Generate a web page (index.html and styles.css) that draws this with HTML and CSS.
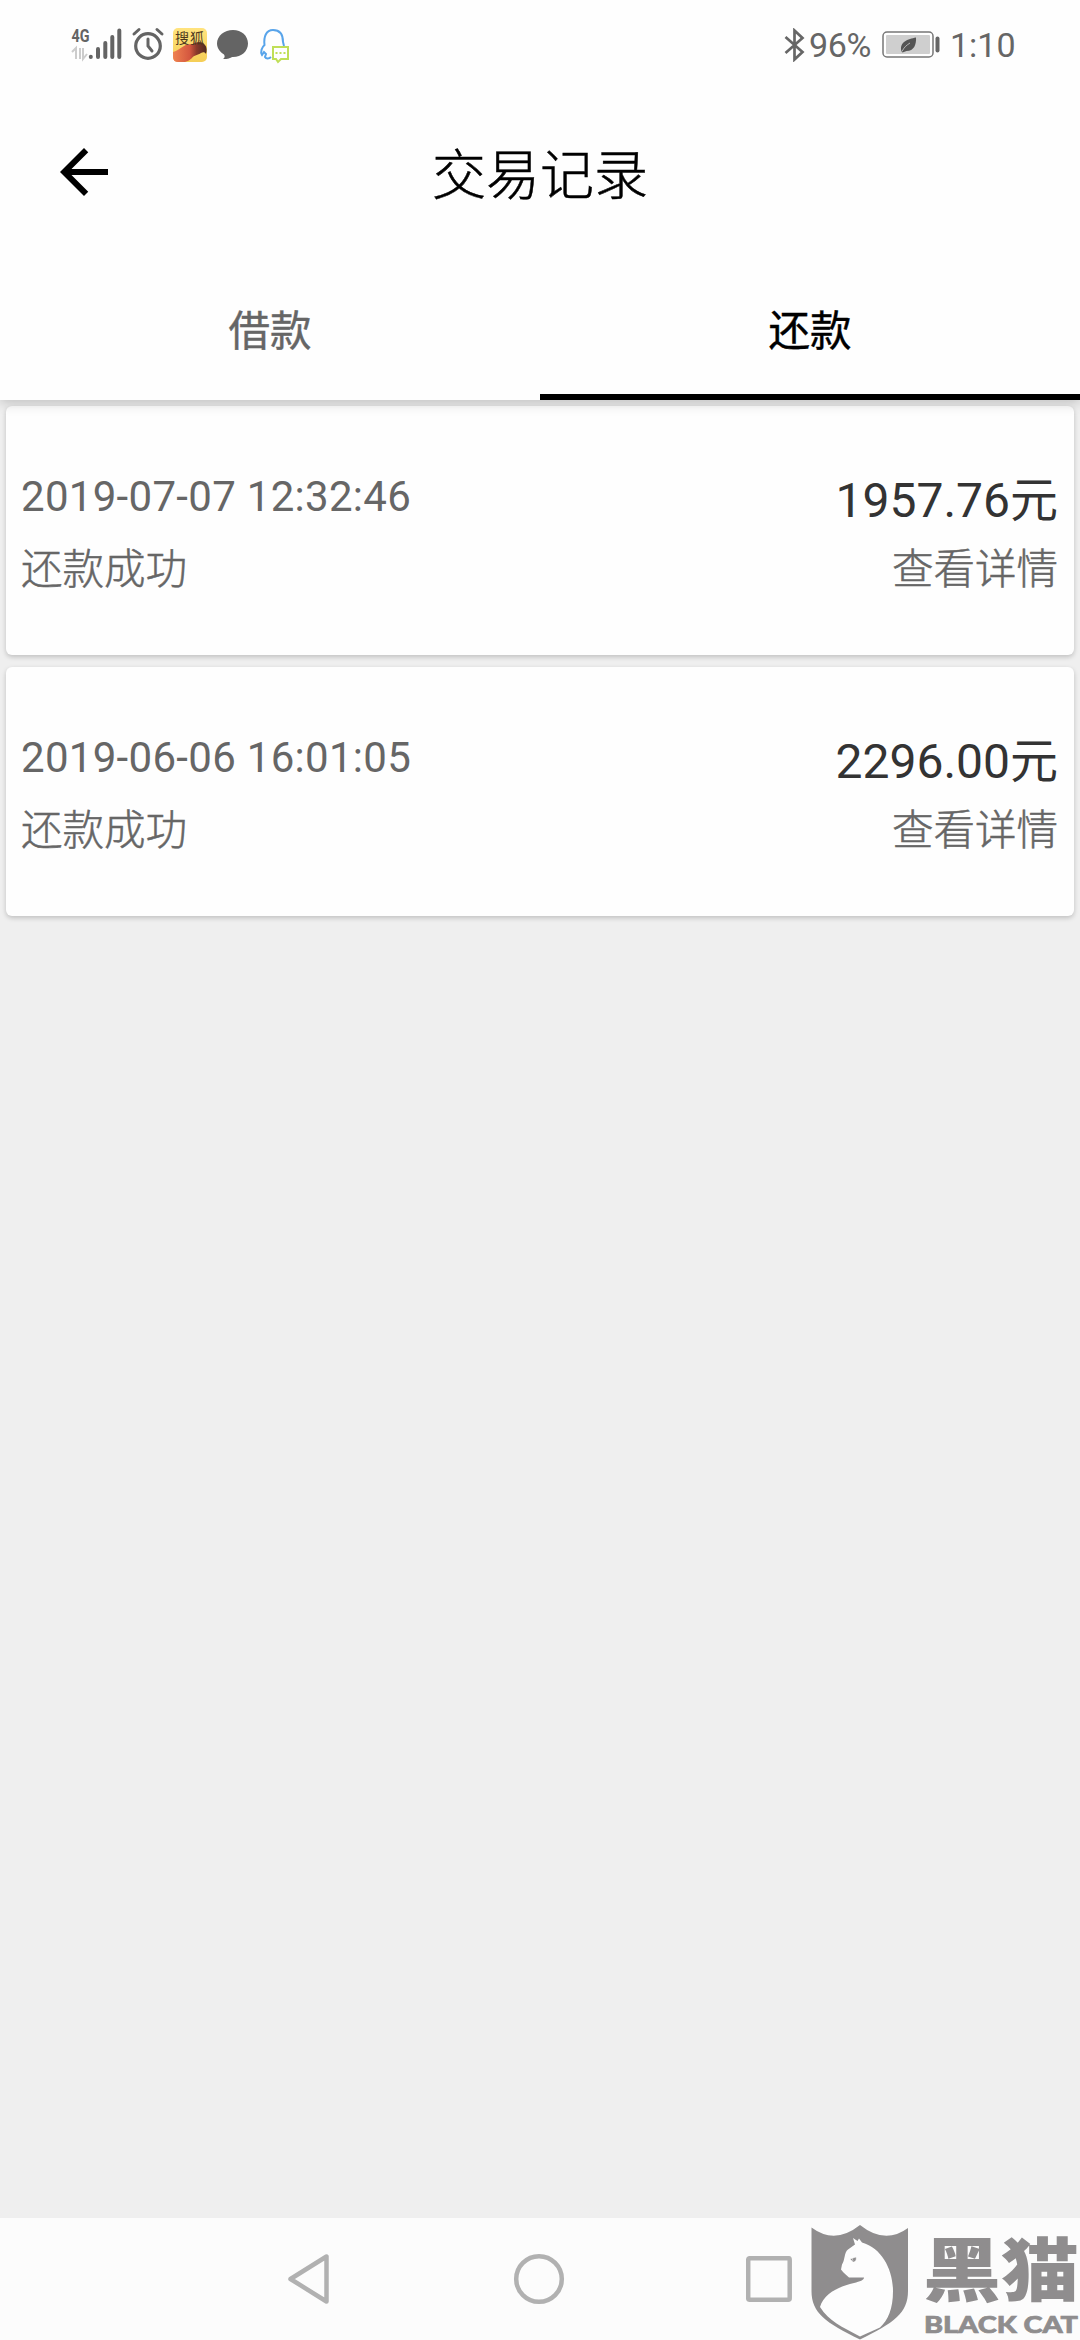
FILE: index.html
```html
<!DOCTYPE html>
<html lang="zh-CN">
<head>
<meta charset="utf-8">
<title>交易记录</title>
<link rel="stylesheet" href="styles.css">
</head>
<body>
<div class="screen">
  <header class="header">
    <div class="status">
      <svg class="status-left" width="240" height="60" viewBox="0 0 240 60">
        <text class="net" x="11.5" y="27" textLength="18" lengthAdjust="spacingAndGlyphs">4G</text>
        <path d="M12 37l4-4v11M20 33v11M23 33v11l4-5" fill="none" stroke="#ccc" stroke-width="2"/>
        <g stroke="#646464" stroke-width="4" stroke-linecap="round">
          <path d="M30.8 41.8v.1M38 34v8M45.3 28v14M52.3 22v20M59.3 15.500v26.500"/>
        </g>
        <g fill="none" stroke="#646464" stroke-linecap="round">
          <circle cx="88" cy="31" r="12.300" stroke-width="3.200"/>
          <path d="M88 24v7l4 5" stroke-width="3"/>
          <path d="M74 19l5-4.500M102 19l-5-4.500" stroke-width="3"/>
        </g>
        <defs>
          <linearGradient id="tile" x1="0" y1="0" x2="0" y2="1"><stop offset="0" stop-color="#ffe37e"/><stop offset="1" stop-color="#f5ce56"/></linearGradient>
          <linearGradient id="tail" x1="0" y1="0" x2="1" y2="0"><stop offset="0" stop-color="#ef8250"/><stop offset=".5" stop-color="#d4573f"/><stop offset=".7" stop-color="#8a3a2a"/><stop offset="1" stop-color="#4c2a22"/></linearGradient>
        </defs>
        <rect x="113" y="13" width="34" height="34" rx="5" fill="url(#tile)"/>
        <path d="M113 37c4-1 7-4 11-6 5-3 8-1 11-3 4-2 8-1 10 2 2 2 2 6 1 9-1-2-3-2-5-1-3 2-7 2-9 5-2 2-4 3-7 4h-7q-5 0-5-5z" fill="url(#tail)"/>
        <text class="tile-text" x="115" y="28" textLength="29">搜狐</text>
        <path d="M173 15c8.500 0 15 5.800 15 13.500S181.500 42 173 42c-2 0-4 2.500-10 2 2-1.500 2-3 1-4.500-3.700-2.500-7-6-7-11C157 20.800 164.500 15 173 15z" fill="#646464"/>
        <path d="M211 42c-2 2-5 2-6 0l1-3-2-2-2 3c-2-3 0-8 2.500-10-1-8 1.500-15 8.500-15s10 5 10 12l1 4" fill="none" stroke="#58a4ea" stroke-width="2"/>
        <path d="M213 32h15v12h-7l-3 3-2-3h-3z" fill="#fff" stroke="#c0df57" stroke-width="2"/>
        <path d="M215.500 38h2M219.500 38h2M223.500 38h2" stroke="#c0df57" stroke-width="2"/>
      </svg>
      <div class="status-right">
        <svg width="22" height="34" viewBox="0 0 22 34"><path d="M1.500 9l17 15-8 7.500v-29L18.500 10l-17 15" fill="none" stroke="#666" stroke-width="2.700"/></svg>
        <span class="percent">96%</span>
        <svg class="battery" width="58" height="28" viewBox="0 0 58 28">
          <rect x="1" y="1" width="50" height="25" rx="4" fill="#fff" stroke="#777" stroke-width="1.500"/>
          <rect x="4" y="4" width="44" height="19" rx="1" fill="#cfcfcf"/>
          <path d="M55.500 7.500v12" stroke="#666" stroke-width="4" stroke-linecap="round"/>
          <path d="M34 6.500c.5 7-2 13.500-9.500 13.500l-4 1.500-1-1C17 11 26 8 34 6.500z" fill="#555"/>
          <path d="M20 20.500c2-4 4-6 8-8.500" fill="none" stroke="#cfcfcf" stroke-width=".8"/>
        </svg>
        <span class="clock">1:10</span>
      </div>
    </div>
    <div class="toolbar">
      <svg class="back" width="72" height="72" viewBox="0 0 24 24"><path d="M20 11H7.830l5.590-5.590L12 4l-8 8 8 8 1.410-1.410L7.830 13H20v-2z"/></svg>
      <h1 class="title">交易记录</h1>
      <span class="spacer"></span>
    </div>
    <nav class="tabs">
      <div class="tab">借款</div>
      <div class="tab tab-active">还款</div>
    </nav>
  </header>
  <main class="list">
    <article class="card">
      <div class="col"><span class="date">2019-07-07 12:32:46</span><span class="note">还款成功</span></div>
      <div class="col col-end"><span class="amount">1957.76元</span><span class="note">查看详情</span></div>
    </article>
    <article class="card">
      <div class="col"><span class="date">2019-06-06 16:01:05</span><span class="note">还款成功</span></div>
      <div class="col col-end"><span class="amount">2296.00元</span><span class="note">查看详情</span></div>
    </article>
  </main>
  <footer class="navbar">
    <svg width="46" height="52" viewBox="0 0 46 52"><path d="M40.500 3.500v45L4.500 26z"/></svg>
    <svg width="52" height="52" viewBox="0 0 52 52"><circle cx="26" cy="26" r="22.800"/></svg>
    <svg width="46" height="46" viewBox="0 0 46 46"><rect x="2.200" y="2.200" width="41.500" height="41.500" rx="1.500"/></svg>
  </footer>
  <svg class="watermark" width="290" height="140" viewBox="0 0 290 140">
    <path d="M21.500 27.500Q45 45 70 25Q95 45 118 28V91C118 113 104 123 70 139.500C36 123 21.500 113 21.500 91z" fill="#8f8d8e"/>
    <path d="M63 38l4.500 3 1.500-2.500 3 4C92 48 103 70 103 91c0 18-5 29-13 36.500L70 136.500C52 127 39 121 30 107c4-13 17-20 34-24 6-1.500 10-3 10-5.500H59c-2-2-5-4-8-8l1-5c3-4 2-12 6-15l7-5z" fill="#fdfdfd"/>
    <path d="M60 59l6-2c1 3-1 5-3 5zM62 58l1 3" fill="#8f8d8e" stroke="#fdfdfd" stroke-width=".5"/>
    <text class="wm-cn" x="133" y="96" textLength="156" lengthAdjust="spacingAndGlyphs">黑猫</text>
    <text class="wm-en" x="134" y="132.500" textLength="154" lengthAdjust="spacingAndGlyphs">BLACK CAT</text>
  </svg>
</div>
</body>
</html>
```
FILE: styles.css
```css
* { box-sizing: border-box; }

body {
  margin: 0;
  font-family: Roboto, "Noto Sans CJK SC", sans-serif;
}

.screen {
  position: relative;
  display: flex;
  flex-direction: column;
  width: 1080px;
  height: 2340px;
  overflow: hidden;
  background: #efefef;
}

.header {
  position: relative;
  z-index: 1;
  height: 400px;
  background: #fefefe;
  box-shadow: 0 3px 12px rgba(0, 0, 0, 0.2);
}

.status {
  display: flex;
  justify-content: space-between;
  height: 90px;
  padding: 15px 66px 0 60px;
}

.net {
  font: 700 19px Roboto, sans-serif;
  fill: #646464;
}

.tile-text {
  font: 400 14px "Noto Sans CJK SC", sans-serif;
  fill: #4d3820;
}

.status-right {
  display: flex;
  align-items: center;
  height: 60px;
  color: #666;
  font-size: 34px;
  line-height: 60px;
}

.percent { width: 62px; margin-left: 3px; letter-spacing: -0.3px; }
.battery { margin-left: 11px; }
.clock { width: 64px; margin-left: 10px; text-align: right; }

.toolbar {
  display: flex;
  align-items: center;
  justify-content: space-between;
  height: 164px;
  padding: 0 48px;
}

.spacer { width: 72px; }

.title {
  margin: 10px 0 0;
  color: #000;
  font-size: 54px;
  font-weight: 300;
  line-height: 80px;
  -webkit-text-stroke: 0.5px currentColor;
}

.tabs { display: flex; height: 146px; }

.tab {
  flex: 1;
  padding-top: 48px;
  color: #666;
  font-size: 41.5px;
  font-weight: 400;
  line-height: 60px;
  text-align: center;
  -webkit-text-stroke: 0.4px currentColor;
}

.tab-active {
  border-bottom: 6px solid #000;
  color: #000;
}

.list {
  display: flex;
  flex: 1;
  flex-direction: column;
  gap: 12px;
  padding: 6px;
}

.card {
  display: flex;
  justify-content: space-between;
  height: 249px;
  padding: 61px 16px 0 15px;
  border-radius: 6px;
  background: #fefefe;
  box-shadow: 0 2px 5px rgba(0, 0, 0, 0.2);
}

.col { display: flex; flex-direction: column; }
.col-end { align-items: flex-end; }

.date,
.amount,
.note {
  height: 73px;
  color: #666;
  font-size: 42px;
  line-height: 60px;
}

.date { letter-spacing: 0.3px; }

.amount {
  color: #333;
  font-size: 48px;
  line-height: 68px;
}

.note {
  font-size: 41.5px;
  font-weight: 300;
  -webkit-text-stroke: 0.5px currentColor;
}

.navbar {
  display: flex;
  align-items: center;
  justify-content: space-between;
  height: 122px;
  padding: 0 288px 0 286px;
  background: #fcfcfc;
}

.navbar svg {
  fill: none;
  stroke: #b1b1b1;
  stroke-width: 4.5;
  stroke-linejoin: round;
}

.watermark {
  position: absolute;
  right: 0;
  bottom: 0;
}

.wm-cn {
  font: 900 69px "Noto Sans CJK SC", sans-serif;
  fill: #8f8d8e;
}

.wm-en {
  font: 900 23.5px Lato, sans-serif;
  fill: #8f8d8e;
  stroke: #8f8d8e;
  stroke-width: 0.7px;
}
```
